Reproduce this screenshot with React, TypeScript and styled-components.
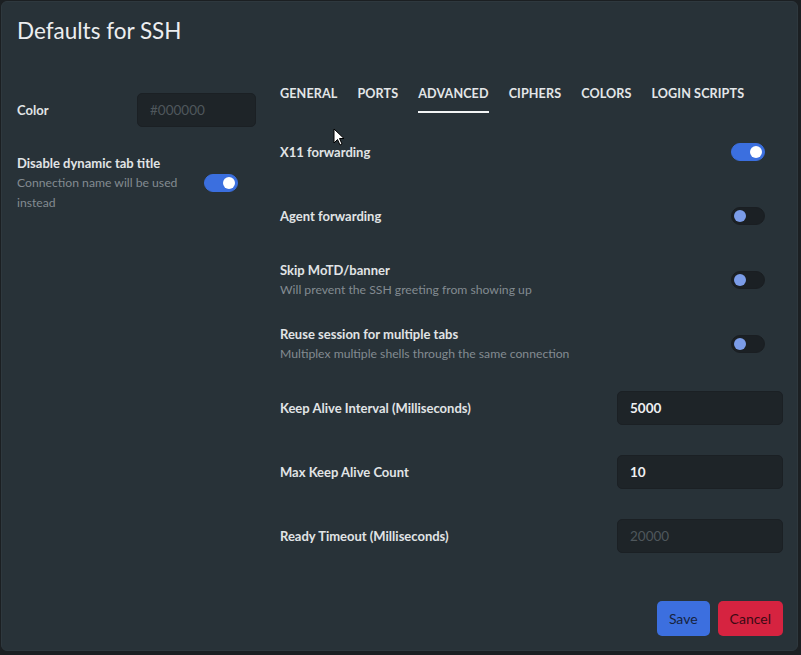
import React from "react";
import styled, { createGlobalStyle } from "styled-components";

const GlobalStyle = createGlobalStyle`
  html, body { margin: 0; padding: 0; background: #1b1f22; }
  body { font-family: Lato, "Noto Sans", sans-serif; color: #e3e6e8; }
  * { box-sizing: border-box; }
`;

const Modal = styled.div`
  position: relative;
  margin: 1px 0 0 1px;
  width: 797px;
  height: 650px;
  background: #283238;
  border: 1px solid #2e383e;
  border-radius: 6px;
  padding: 13px 14px 14px 15px;
  display: flex;
  flex-direction: column;
`;

const Title = styled.h1`
  margin: 0;
  font-size: 22.5px;
  font-weight: 400;
  line-height: 32px;
  color: #eceef0;
`;

const Body = styled.div`
  margin-top: 30px;
  display: grid;
  grid-template-columns: 239px 1fr;
  column-gap: 24px;
`;

const LeftCol = styled.div`
  display: flex;
  flex-direction: column;
  padding-top: 13px;
  gap: 23px;
`;

const RightCol = styled.div`
  display: flex;
  flex-direction: column;
`;

const SettingRow = styled.div`
  display: flex;
  align-items: center;
  justify-content: space-between;
  min-height: 40px;
`;

const TextBlock = styled.div<{ $width?: number }>`
  display: flex;
  flex-direction: column;
  ${(p) => (p.$width ? `width: ${p.$width}px;` : "")}
`;

const Label = styled.div`
  font-size: 13px;
  font-weight: 700;
  line-height: 20px;
  color: #e1e4e6;
`;

const Hint = styled.div`
  font-size: 12.2px;
  font-weight: 400;
  line-height: 20px;
  color: #838b91;
`;

const Input = styled.input<{ $width: number }>`
  width: ${(p) => p.$width}px;
  height: 34px;
  background: #1e2428;
  border: 1px solid #1b2024;
  border-radius: 5px;
  padding: 0 12px;
  font-family: inherit;
  font-size: 13.5px;
  font-weight: 700;
  color: #eef0f2;
  outline: none;
  &::placeholder {
    color: #4f575c;
    font-weight: 400;
  }
`;

const Switch = styled.div<{ $on: boolean }>`
  position: relative;
  width: 34px;
  height: 18px;
  border-radius: 9px;
  margin-right: 18px;
  flex-shrink: 0;
  background: ${(p) => (p.$on ? "#3b6fdf" : "#1b2024")};
  border: 1px solid ${(p) => (p.$on ? "#3b6fdf" : "#1a1e22")};
  &::after {
    content: "";
    position: absolute;
    top: 2px;
    ${(p) => (p.$on ? "right: 2px;" : "left: 2px;")}
    width: 12px;
    height: 12px;
    border-radius: 50%;
    background: ${(p) => (p.$on ? "#ffffff" : "#7b9ce8")};
  }
`;

const Tabs = styled.div`
  display: flex;
  gap: 20px;
  height: 36px;
`;

const Tab = styled.div<{ $active?: boolean }>`
  padding-top: 7px;
  line-height: 20px;
  height: 36px;
  font-size: 12.6px;
  font-weight: 700;
  letter-spacing: 0.1px;
  text-transform: uppercase;
  color: #e3e6e8;
  border-bottom: 2px solid ${(p) => (p.$active ? "#f2f4f5" : "transparent")};
`;

const Rows = styled.div`
  margin-top: 19px;
  display: flex;
  flex-direction: column;
  gap: 24px;
`;

const Footer = styled.div`
  margin-top: auto;
  display: flex;
  justify-content: flex-end;
  gap: 8px;
`;

const Button = styled.button<{ $variant: "primary" | "danger" }>`
  height: 35px;
  padding: 0 12px;
  border: none;
  border-radius: 5px;
  font-family: inherit;
  font-size: 14px;
  font-weight: 400;
  background: ${(p) => (p.$variant === "primary" ? "#3c6fdf" : "#d62340")};
  color: ${(p) => (p.$variant === "primary" ? "#17233d" : "#3b0a14")};
`;

const Cursor = styled.svg`
  position: absolute;
  left: 331px;
  top: 126px;
`;

const tabs = ["General", "Ports", "Advanced", "Ciphers", "Colors", "Login Scripts"];

export default function App() {
  return (
    <>
      <GlobalStyle />
      <Modal>
        <Title>Defaults for SSH</Title>
        <Body>
          <LeftCol>
            <SettingRow>
              <Label>Color</Label>
              <Input $width={119} placeholder="#000000" />
            </SettingRow>
            <SettingRow>
              <TextBlock $width={185}>
                <Label>Disable dynamic tab title</Label>
                <Hint>Connection name will be used instead</Hint>
              </TextBlock>
              <Switch $on />
            </SettingRow>
          </LeftCol>
          <RightCol>
            <Tabs>
              {tabs.map((t) => (
                <Tab key={t} $active={t === "Advanced"}>
                  {t}
                </Tab>
              ))}
            </Tabs>
            <Rows>
              <SettingRow>
                <Label>X11 forwarding</Label>
                <Switch $on />
              </SettingRow>
              <SettingRow>
                <Label>Agent forwarding</Label>
                <Switch $on={false} />
              </SettingRow>
              <SettingRow>
                <TextBlock>
                  <Label>Skip MoTD/banner</Label>
                  <Hint>Will prevent the SSH greeting from showing up</Hint>
                </TextBlock>
                <Switch $on={false} />
              </SettingRow>
              <SettingRow>
                <TextBlock>
                  <Label>Reuse session for multiple tabs</Label>
                  <Hint>Multiplex multiple shells through the same connection</Hint>
                </TextBlock>
                <Switch $on={false} />
              </SettingRow>
              <SettingRow>
                <Label>Keep Alive Interval (Milliseconds)</Label>
                <Input $width={166} defaultValue="5000" />
              </SettingRow>
              <SettingRow>
                <Label>Max Keep Alive Count</Label>
                <Input $width={166} defaultValue="10" />
              </SettingRow>
              <SettingRow>
                <Label>Ready Timeout (Milliseconds)</Label>
                <Input $width={166} placeholder="20000" />
              </SettingRow>
            </Rows>
          </RightCol>
        </Body>
        <Footer>
          <Button $variant="primary">Save</Button>
          <Button $variant="danger">Cancel</Button>
        </Footer>
        <Cursor width="12" height="19" viewBox="0 0 12 19">
          <path d="M1 1 L1 15 L4.5 11.5 L7 17 L9 16 L6.5 10.5 L11 10.5 Z" fill="#ffffff" stroke="#000000" strokeWidth="1" />
        </Cursor>
      </Modal>
    </>
  );
}
